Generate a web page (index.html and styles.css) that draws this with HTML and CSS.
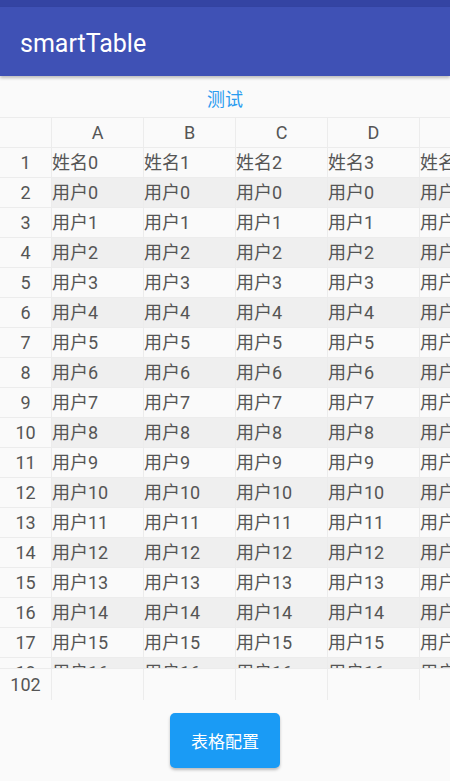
FILE: index.html
```html
<!DOCTYPE html>
<html lang="zh">
<head>
<meta charset="utf-8">
<link rel="stylesheet" href="styles.css">
</head>
<body>
<div class="status"></div>
<header class="appbar"><span class="title">smartTable</span></header>
<div class="caption">测试</div>
<div class="table">
  <div class="row head">
    <div class="cell num"></div>
    <div class="cell c">A</div>
    <div class="cell c">B</div>
    <div class="cell c">C</div>
    <div class="cell c">D</div>
    <div class="cell c"></div>
  </div>
  <div class="body" id="body">
    <div class="row"><div class="cell num">1</div><div class="cell">姓名0</div><div class="cell">姓名1</div><div class="cell">姓名2</div><div class="cell">姓名3</div><div class="cell">姓名4</div></div>
    <div class="row alt"><div class="cell num">2</div><div class="cell">用户0</div><div class="cell">用户0</div><div class="cell">用户0</div><div class="cell">用户0</div><div class="cell">用户0</div></div>
    <div class="row"><div class="cell num">3</div><div class="cell">用户1</div><div class="cell">用户1</div><div class="cell">用户1</div><div class="cell">用户1</div><div class="cell">用户1</div></div>
    <div class="row alt"><div class="cell num">4</div><div class="cell">用户2</div><div class="cell">用户2</div><div class="cell">用户2</div><div class="cell">用户2</div><div class="cell">用户2</div></div>
    <div class="row"><div class="cell num">5</div><div class="cell">用户3</div><div class="cell">用户3</div><div class="cell">用户3</div><div class="cell">用户3</div><div class="cell">用户3</div></div>
    <div class="row alt"><div class="cell num">6</div><div class="cell">用户4</div><div class="cell">用户4</div><div class="cell">用户4</div><div class="cell">用户4</div><div class="cell">用户4</div></div>
    <div class="row"><div class="cell num">7</div><div class="cell">用户5</div><div class="cell">用户5</div><div class="cell">用户5</div><div class="cell">用户5</div><div class="cell">用户5</div></div>
    <div class="row alt"><div class="cell num">8</div><div class="cell">用户6</div><div class="cell">用户6</div><div class="cell">用户6</div><div class="cell">用户6</div><div class="cell">用户6</div></div>
    <div class="row"><div class="cell num">9</div><div class="cell">用户7</div><div class="cell">用户7</div><div class="cell">用户7</div><div class="cell">用户7</div><div class="cell">用户7</div></div>
    <div class="row alt"><div class="cell num">10</div><div class="cell">用户8</div><div class="cell">用户8</div><div class="cell">用户8</div><div class="cell">用户8</div><div class="cell">用户8</div></div>
    <div class="row"><div class="cell num">11</div><div class="cell">用户9</div><div class="cell">用户9</div><div class="cell">用户9</div><div class="cell">用户9</div><div class="cell">用户9</div></div>
    <div class="row alt"><div class="cell num">12</div><div class="cell">用户10</div><div class="cell">用户10</div><div class="cell">用户10</div><div class="cell">用户10</div><div class="cell">用户10</div></div>
    <div class="row"><div class="cell num">13</div><div class="cell">用户11</div><div class="cell">用户11</div><div class="cell">用户11</div><div class="cell">用户11</div><div class="cell">用户11</div></div>
    <div class="row alt"><div class="cell num">14</div><div class="cell">用户12</div><div class="cell">用户12</div><div class="cell">用户12</div><div class="cell">用户12</div><div class="cell">用户12</div></div>
    <div class="row"><div class="cell num">15</div><div class="cell">用户13</div><div class="cell">用户13</div><div class="cell">用户13</div><div class="cell">用户13</div><div class="cell">用户13</div></div>
    <div class="row alt"><div class="cell num">16</div><div class="cell">用户14</div><div class="cell">用户14</div><div class="cell">用户14</div><div class="cell">用户14</div><div class="cell">用户14</div></div>
    <div class="row"><div class="cell num">17</div><div class="cell">用户15</div><div class="cell">用户15</div><div class="cell">用户15</div><div class="cell">用户15</div><div class="cell">用户15</div></div>
    <div class="row alt"><div class="cell num">18</div><div class="cell">用户16</div><div class="cell">用户16</div><div class="cell">用户16</div><div class="cell">用户16</div><div class="cell">用户16</div></div>
  </div>
  <div class="row foot">
    <div class="cell num">102</div>
    <div class="cell"></div>
    <div class="cell"></div>
    <div class="cell"></div>
    <div class="cell"></div>
    <div class="cell"></div>
  </div>
</div>
<div class="actions"><button class="btn">表格配置</button></div>
</body>
</html>
```
FILE: styles.css
```css
* { box-sizing: border-box; }
html, body { margin: 0; padding: 0; }
body {
  width: 450px;
  height: 781px;
  overflow: hidden;
  background: #fafafa;
  font-family: Roboto, "Noto Sans CJK SC", sans-serif;
}
.status {
  height: 7px;
  background: #3444a3;
}
.appbar {
  height: 69px;
  background: #3f51b5;
  display: flex;
  align-items: center;
  padding: 0 0 0 20px;
  box-shadow: 0 2px 3px rgba(0,0,0,0.25);
  position: relative;
  z-index: 1;
}
.title {
  color: #ffffff;
  font-size: 25px;
  font-weight: 400;
  margin-top: 3px;
}
.caption {
  height: 41px;
  display: flex;
  align-items: center;
  justify-content: center;
  color: #2a9cf0;
  font-size: 18px;
  padding-top: 2px;
}
.table {
  width: 450px;
  overflow: hidden;
  border-top: 1px solid #ececec;
}
.row {
  display: grid;
  grid-template-columns: 52px 92px 92px 92px 92px 92px;
  height: 30px;
  width: 512px;
  border-bottom: 1px solid #ececec;
}
.cell {
  border-right: 1px solid #ececec;
  color: #555555;
  font-size: 18px;
  line-height: 30px;
  white-space: nowrap;
  overflow: hidden;
  padding-left: 0;
}
.cell.num, .cell.c {
  text-align: center;
}
.row.alt .cell:not(.num) {
  background: #efefef;
}
.body {
  height: 520px;
  overflow: hidden;
}
.row.foot {
  height: 32px;
  border-bottom: none;
  border-top: 1px solid #ececec;
}
.row.foot .cell {
  line-height: 31px;
}
.actions {
  display: flex;
  justify-content: center;
  padding-top: 13px;
}
.btn {
  width: 110px;
  height: 55px;
  border: none;
  border-radius: 5px;
  background: #1a9bf5;
  color: #ffffff;
  font-family: Roboto, "Noto Sans CJK SC", sans-serif;
  font-size: 17px;
  box-shadow: 0 2px 3px rgba(0,0,0,0.25);
}
```
